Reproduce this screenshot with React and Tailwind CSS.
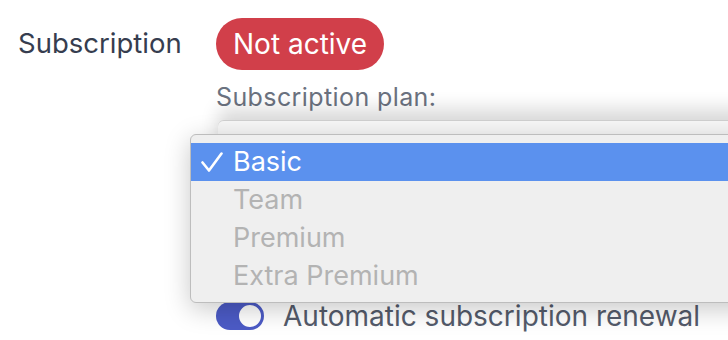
import React, { useState } from "react";

const plans = ["Basic", "Team", "Premium", "Extra Premium"];

const App = () => {
  const [selected] = useState("Basic");
  const [renew, setRenew] = useState(true);

  return (
    <div className="w-[728px] h-[340px] overflow-hidden bg-white font-['Inter','Liberation_Sans',sans-serif]">
      <div className="flex pl-[18px] pt-[18px]">
        {/* label column */}
        <div className="w-[198px] shrink-0 h-[52px] flex items-center text-[27.5px] text-[#363d4f]">
          Subscription
        </div>

        <div className="flex flex-col">
          <div className="h-[52px] px-[17px] rounded-full bg-[#d13f4a] text-white text-[28px] flex items-center self-start">
            Not active
          </div>

          <div className="mt-[12px] text-[25px] tracking-[0.4px] leading-[30px] text-[#6b7280]">
            Subscription plan:
          </div>

          {/* select + open menu */}
          <div className="relative h-[182px] mt-[8px]">
            <div className="h-[44px] w-[560px] ml-[2px] rounded-t-[6px] bg-[#f7f7f7] border-t border-[#d0d0d0] shadow-[0_-12px_18px_rgba(0,0,0,0.14)]"></div>

            <div className="absolute left-[-26px] top-[14px] w-[600px] h-[169px] rounded-[6px] bg-[#efefef] border border-[#bdbdbd] shadow-[0_6px_26px_rgba(0,0,0,0.22)] pt-[8px]">
              {plans.map((p) => (
                <div
                  key={p}
                  className={
                    p === selected
                      ? "h-[38px] flex items-center bg-[#5b91ee] text-white text-[27px]"
                      : "h-[38px] flex items-center text-[#b3b3b3] text-[27px]"
                  }
                >
                  <span className="w-[42px] pl-[10px] flex items-center">
                    {p === selected && (
                      <svg width="22" height="20" viewBox="0 0 22 20" fill="none">
                        <path d="M1.5 10.5 L8 18.5 L20.5 1.5" stroke="white" strokeWidth="2.6" strokeLinecap="round" strokeLinejoin="round" />
                      </svg>
                    )}
                  </span>
                  <span>{p}</span>
                </div>
              ))}
            </div>
          </div>

          <div className="flex items-center gap-[19px] h-[28px]">
            <button
              type="button"
              onClick={() => setRenew(!renew)}
              className="w-[48px] h-[28px] shrink-0 rounded-full bg-[#4c5bc6] flex items-center justify-end px-[1px]"
            >
              <span className="w-[26px] h-[26px] rounded-full bg-white border-2 border-[#4c5bc6]"></span>
            </button>
            <span className="text-[28px] text-[#545b6b] leading-none whitespace-nowrap">
              Automatic subscription renewal
            </span>
          </div>
        </div>
      </div>
    </div>
  );
};

export default App;
